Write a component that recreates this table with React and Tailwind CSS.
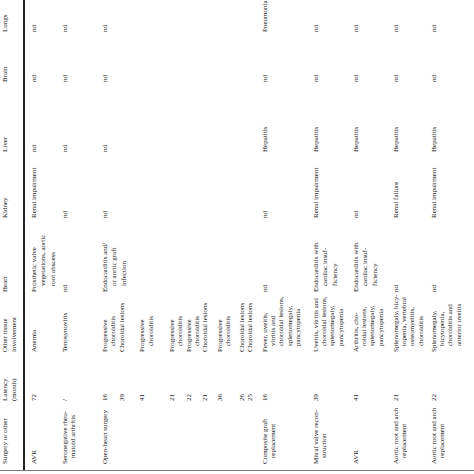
const cols = ['w-[63px]', 'w-[49px]', 'w-[60px]', 'w-[74px]', 'w-[66px]', 'w-[70px]', 'w-[50px]', 'w-[80px]'];

const header = [
  ['Surgery or other'],
  ['Latency', '(month)'],
  ['Other tissue', 'involvement'],
  ['Heart'],
  ['Kidney'],
  ['Liver'],
  ['Brain'],
  ['Lungs'],
];

const rowsBefore = [
  {
    h: 'h-[31px]',
    cells: [['AVR'], ['72'], ['Anemia'], ['Prosthetic valve', 'vegetations, aortic', 'root abscess'], ['Renal impairment'], ['nd'], ['nd'], ['nd']],
  },
  {
    h: 'h-[40px]',
    cells: [['Seronegative rheu-', 'matoid arthritis'], ['/'], ['Tenosynovitis'], ['nd'], ['nd'], ['nd'], ['nd'], ['nd']],
  },
];

// open-heart surgery group: one surgery, many latency / tissue sub rows
const openHeart = [
  { h: 'h-[17.5px]', lat: '16', tissue: ['Progressive', 'choroiditis'] },
  { h: 'h-[20px]', lat: '39', tissue: ['Choroidal lesions'] },
  { h: 'h-[29.5px]', lat: '41', tissue: ['Progressive', 'choroiditis'] },
  { h: 'h-[17px]', lat: '21', tissue: ['Progressive', 'choroiditis'] },
  { h: 'h-[16px]', lat: '22', tissue: ['Progressive', 'choroiditis'] },
  { h: 'h-[15px]', lat: '21', tissue: ['Choroidal lesions'] },
  { h: 'h-[22px]', lat: '36', tissue: ['Progressive', 'choroiditis'] },
  { h: 'h-[8px]', lat: '26', tissue: ['Choroidal lesions'] },
  { h: 'h-[15px]', lat: '25', tissue: ['Choroidal lesions'] },
];

const rowsAfter = [
  {
    h: 'h-[51px]',
    cells: [
      ['Composite graft', 'replacement'],
      ['16'],
      ['Fever, uveitis,', 'vitritis and', 'choroidal lesions,', 'splenomegaly,', 'pancytopenia'],
      ['nd'],
      ['nd'],
      ['Hepatitis'],
      ['nd'],
      ['Pneumonia'],
    ],
  },
  {
    h: 'h-[40px]',
    cells: [
      ['Mitral valve recon-', 'struction'],
      ['39'],
      ['Uveitis, vitritis and', 'choroidal lesions,', 'splenomegaly,', 'pancytopenia'],
      ['Endocarditis with', 'cardiac insuf-', 'ficiency'],
      ['Renal impairment'],
      ['Hepatitis'],
      ['nd'],
      ['nd'],
    ],
  },
  {
    h: 'h-[40px]',
    cells: [
      ['AVR'],
      ['41'],
      ['Arthritis, cho-', 'roidal lesions,', 'splenomegaly,', 'pancytopenia'],
      ['Endocarditis with', 'cardiac insuf-', 'ficiency'],
      ['nd'],
      ['Hepatitis'],
      ['nd'],
      ['nd'],
    ],
  },
  {
    h: 'h-[38px]',
    cells: [
      ['Aortic root and arch', 'replacement'],
      ['21'],
      ['Splenomegaly, bicy-', 'topenia, vertebral', 'osteomyelitis,', 'choroiditis'],
      ['nd'],
      ['Renal failure'],
      ['Hepatitis'],
      ['nd'],
      ['nd'],
    ],
  },
  {
    h: 'h-[40px]',
    cells: [
      ['Aortic root and arch', 'replacement'],
      ['22'],
      ['Splenomegaly,', 'bicytopenia,', 'choroiditis and', 'anterior uveitis'],
      ['nd'],
      ['Renal impairment'],
      ['Hepatitis'],
      ['nd'],
      ['nd'],
    ],
  },
];

function Cell({ lines, width, hang = true, loose = false }) {
  return (
    <div className={`${width} shrink-0 whitespace-nowrap ${loose ? 'leading-[9.4px]' : ''}`}>
      {lines.map((line, i) => (
        <div key={i} className={i > 0 && hang ? 'pl-[6px]' : ''}>{line}</div>
      ))}
    </div>
  );
}

function Row({ row }) {
  return (
    <div className={`flex pl-[6px] ${row.h}`}>
      {row.cells.map((lines, i) => (
        <Cell key={i} lines={lines} width={cols[i]} loose={i === 3} />
      ))}
    </div>
  );
}

export default function App() {
  return (
    <div className="h-[474px] w-[474px] overflow-hidden bg-white">
      <div
        className="h-[474px] w-[474px] -rotate-90 text-[7px] leading-[8.2px] text-[#161616]"
        style={{ fontFamily: '"Liberation Serif", "Times New Roman", serif' }}
      >
        <div className="ml-[3px] h-full border-l border-[#7a7a7a]">
          <div className="flex h-[23px] pl-[6px] pt-[1.3px]">
            {header.map((lines, i) => (
              <Cell key={i} lines={lines} width={cols[i]} hang={false} />
            ))}
          </div>
          <div className="h-[1.5px] w-[600px] bg-[#222]" />
          <div className="pt-[5.4px]">
            {rowsBefore.map((row, i) => (
              <Row key={i} row={row} />
            ))}
            <div className="flex h-[160px] pl-[6px]">
              <Cell lines={['Open-heart surgery']} width={cols[0]} />
              <div className="w-[109px] shrink-0">
                {openHeart.map((sub, i) => (
                  <div key={i} className={`flex ${sub.h}`}>
                    <Cell lines={[sub.lat]} width={cols[1]} />
                    <Cell lines={sub.tissue} width={cols[2]} />
                  </div>
                ))}
              </div>
              <Cell lines={['Endocarditis and/', 'or aortic graft', 'infection']} width={cols[3]} loose />
              <Cell lines={['nd']} width={cols[4]} />
              <Cell lines={['nd']} width={cols[5]} />
              <Cell lines={['nd']} width={cols[6]} />
              <Cell lines={['nd']} width={cols[7]} />
            </div>
            {rowsAfter.map((row, i) => (
              <Row key={i} row={row} />
            ))}
          </div>
        </div>
      </div>
    </div>
  );
}
